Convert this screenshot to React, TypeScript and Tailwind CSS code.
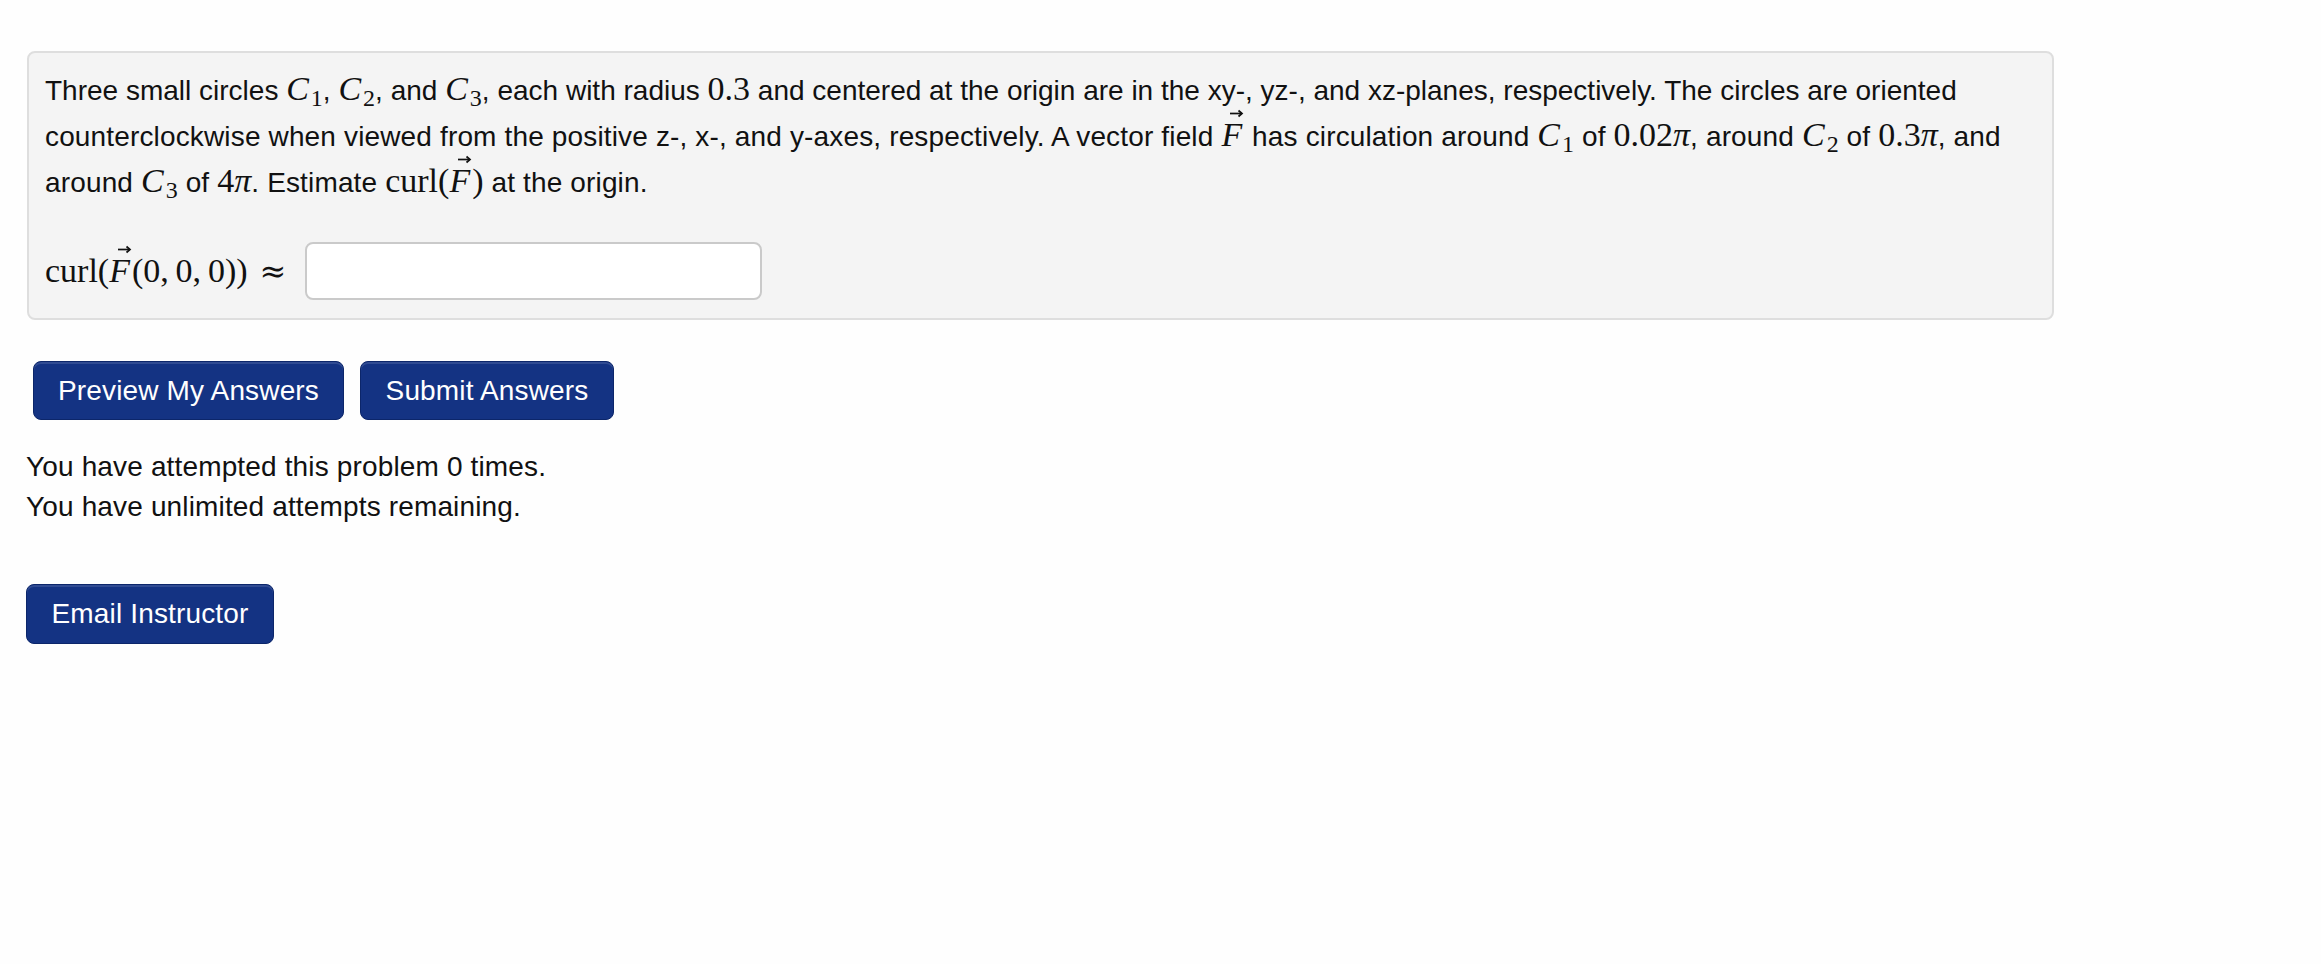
import type { ReactNode } from "react";

const M = ({ children }: { children: ReactNode }) => (
  <span className="font-['Liberation_Serif',serif] text-[34px] leading-none tracking-normal">{children}</span>
);

const I = ({ children }: { children: ReactNode }) => <span className="italic">{children}</span>;

const Sub = ({ children }: { children: ReactNode }) => (
  <span className="text-[24px] align-[-6px] ml-[2px]">{children}</span>
);

const C = ({ n }: { n: number }) => (
  <M>
    <I>C</I>
    <Sub>{n}</Sub>
  </M>
);

const VecF = () => (
  <span className="relative inline-block italic pr-[2px]">
    F
    <svg
      className="absolute left-[8px] top-[-9px] w-[15px] h-[9px]"
      viewBox="0 0 15 9"
      fill="none"
      stroke="currentColor"
    >
      <path d="M1 4.5h12" strokeWidth="1.7" />
      <path d="M9.5 1.5l3.5 3-3.5 3" strokeWidth="1.7" />
    </svg>
  </span>
);

const Btn = ({ children, className = "" }: { children: ReactNode; className?: string }) => (
  <button
    className={
      "flex items-center justify-center rounded-[8px] border border-[#0c266a] bg-[#143383] text-white text-[28px] leading-[40px] shadow-[inset_0_2px_0_rgba(255,255,255,0.12)] " +
      className
    }
  >
    {children}
  </button>
);

export default function App() {
  return (
    <div className="min-h-screen h-[964px] bg-[#fefefe] text-[#111] font-['Liberation_Sans',Arial,sans-serif] text-[28px] leading-[40px] tracking-[0.15px] pl-[26px] pt-[51px]">
      <div className="ml-px w-[2027px] rounded-[8px] border-2 border-[#dedede] bg-[#f4f4f4] px-4 pt-[15px] pb-[18px]">
        <p className="leading-[46px]">
          <span className="tracking-normal">
            Three small circles <C n={1} />, <C n={2} />, and <C n={3} />, each with radius <M>0.3</M> and
            centered at the origin are in the xy-, yz-, and xz-planes, respectively. The circles are oriented
          </span>
          <br />
          counterclockwise when viewed from the positive z-, x-, and y-axes, respectively. A vector field{" "}
          <M>
            <VecF />
          </M>{" "}
          has circulation around <C n={1} /> of{" "}
          <M>
            0.02<I>π</I>
          </M>
          , around <C n={2} /> of{" "}
          <M>
            0.3<I>π</I>
          </M>
          , and
          <br />
          around <C n={3} /> of{" "}
          <M>
            4<I>π</I>
          </M>
          . Estimate{" "}
          <M>
            curl(<VecF />)
          </M>{" "}
          at the origin.
        </p>
        <div className="mt-[36px] flex items-center gap-[19px]">
          <span className="flex items-center gap-[12px] font-['Liberation_Serif',serif] text-[34px] leading-none tracking-normal">
            <span>
              curl(
              <VecF />
              (0,&#8201;0,&#8201;0))
            </span>
            <span className="font-['DejaVu_Serif',serif] text-[32px]">≈</span>
          </span>
          <input
            type="text"
            className="h-[58px] w-[457px] rounded-[8px] border-2 border-[#cacaca] bg-white px-3 outline-none"
          />
        </div>
      </div>

      <div className="mt-[41px] ml-[7px] flex gap-[16px]">
        <Btn className="h-[59px] w-[311px]">Preview My Answers</Btn>
        <Btn className="h-[59px] w-[254px]">Submit Answers</Btn>
      </div>

      <div className="mt-[27px]">
        <div>You have attempted this problem 0 times.</div>
        <div>You have unlimited attempts remaining.</div>
      </div>

      <div className="mt-[57px]">
        <Btn className="h-[60px] w-[248px]">Email Instructor</Btn>
      </div>
    </div>
  );
}
